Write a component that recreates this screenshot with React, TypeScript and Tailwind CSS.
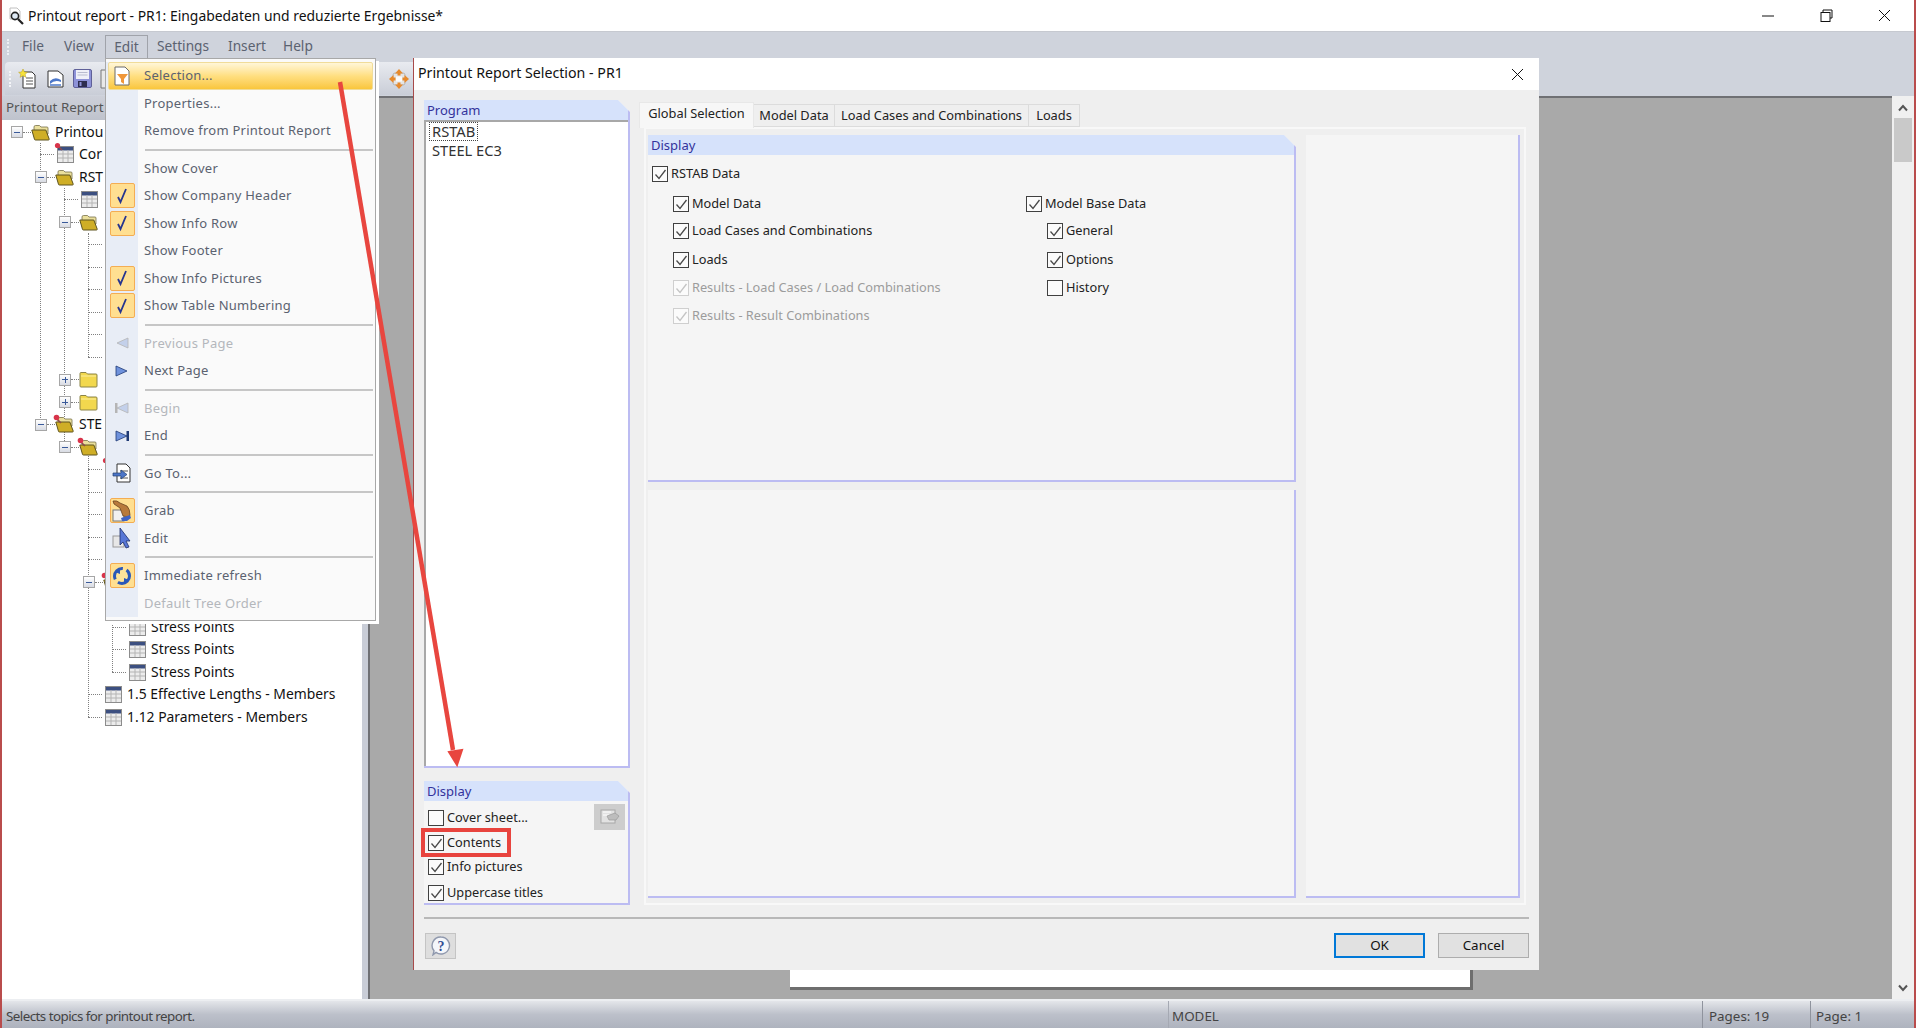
import React from 'react'

// small drawn icons
function Folder({ open = false, pin = false }: { open?: boolean; pin?: boolean }) {
  return (
    <svg width="19" height="17" viewBox="0 0 19 17" className="shrink-0 overflow-visible">
      {open ? (
        <>
          <path d="M3 3 q0 -1.5 1.5 -1.5 h4 l1.5 1.5 h6 q1 0 1 1 v6 h-14 z" fill="#eadf9c" stroke="#77704a" strokeWidth="0.8" />
          <path d="M0.8 6 h14 l3.4 9 q.2 1 -.8 1 h-13 q-.8 0 -1 -1 z" fill="#cfae26" stroke="#5f5520" />
        </>
      ) : (
        <>
          <path d="M1 2.5 q0 -1 1 -1 h5 l1.5 1.5 h8.5 q1 0 1 1 v11 q0 1 -1 1 h-15 q-1 0 -1 -1 z" fill="#f2d84e" stroke="#8b8448" />
          <path d="M2 5 h15" stroke="#fbeea0" />
        </>
      )}
      {pin && (
        <g>
          <path d="M0 1 l6 6" stroke="#8c4a4a" strokeWidth="1.5" />
          <circle cx="1.5" cy="1.5" r="2.8" fill="#d8344a" />
        </g>
      )}
    </svg>
  )
}

function TableIcon({ pin = false }: { pin?: boolean }) {
  return (
    <svg width="17" height="17" viewBox="0 0 17 17" className="shrink-0 overflow-visible">
      <rect x="0.5" y="0.5" width="16" height="16" fill="#ececec" stroke="#8c8c8c" />
      <rect x="1" y="1" width="15" height="3.5" fill="#3c4f80" />
      <path d="M1 8 h15 M1 12 h15 M6 4 v12 M11 4 v12" stroke="#b4b4b4" />
      {pin && (
        <g>
          <path d="M0 -1 l5 5" stroke="#8c4a4a" strokeWidth="1.4" />
          <circle cx="0.5" cy="-0.5" r="2.6" fill="#d8344a" />
        </g>
      )}
    </svg>
  )
}

function Expander({ plus = false }: { plus?: boolean }) {
  return (
    <span className="relative flex h-3 w-3 shrink-0 items-center justify-center border-[1.5px] border-[#a6a6a6] bg-gradient-to-b from-[#ffffff] to-[#d8dbe3]">
      <span className="h-px w-[6px] bg-[#3a5a9a]" />
      {plus && <span className="absolute h-[6px] w-px bg-[#3a5a9a]" />}
    </span>
  )
}

function Dash({ w }: { w: string }) {
  return <span className={`shrink-0 border-t border-dotted border-[#808080] ${w}`} />
}

type Row = { pl: string; box?: 'minus' | 'plus'; icon: 'open' | 'closed' | 'openpin' | 'table' | 'tablepin'; text?: string }

const treeRows: Row[] = [
  { pl: 'pl-[9px]', box: 'minus', icon: 'open', text: 'Printou' },
  { pl: 'pl-[38px]', icon: 'tablepin', text: 'Cor' },
  { pl: 'pl-[33px]', box: 'minus', icon: 'open', text: 'RST' },
  { pl: 'pl-[62px]', icon: 'table' },
  { pl: 'pl-[57px]', box: 'minus', icon: 'open' },
  { pl: 'pl-[86px]', icon: 'table' },
  { pl: 'pl-[86px]', icon: 'table' },
  { pl: 'pl-[86px]', icon: 'table' },
  { pl: 'pl-[86px]', icon: 'table' },
  { pl: 'pl-[86px]', icon: 'table' },
  { pl: 'pl-[86px]', icon: 'table' },
  { pl: 'pl-[57px]', box: 'plus', icon: 'closed' },
  { pl: 'pl-[57px]', box: 'plus', icon: 'closed' },
  { pl: 'pl-[33px]', box: 'minus', icon: 'openpin', text: 'STE' },
  { pl: 'pl-[57px]', box: 'minus', icon: 'openpin' },
  { pl: 'pl-[86px]', icon: 'tablepin' },
  { pl: 'pl-[86px]', icon: 'table' },
  { pl: 'pl-[86px]', icon: 'table' },
  { pl: 'pl-[86px]', icon: 'table' },
  { pl: 'pl-[86px]', icon: 'table' },
  { pl: 'pl-[81px]', box: 'minus', icon: 'openpin' },
  { pl: 'pl-[110px]', icon: 'table' },
  { pl: 'pl-[110px]', icon: 'table', text: 'Stress Points' },
  { pl: 'pl-[110px]', icon: 'table', text: 'Stress Points' },
  { pl: 'pl-[110px]', icon: 'table', text: 'Stress Points' },
  { pl: 'pl-[86px]', icon: 'table', text: '1.5 Effective Lengths - Members' },
  { pl: 'pl-[86px]', icon: 'table', text: '1.12 Parameters - Members' },
]

function TreeView() {
  return (
    <div className="relative flex-1 overflow-hidden bg-white pt-[1px] text-[13.9px] text-[#111]">
      {/* guide lines */}
      <div className="absolute left-[38px] top-[23px] h-[281px] border-l border-dotted border-[#808080]" />
      <div className="absolute left-[62px] top-[68px] h-[259px] border-l border-dotted border-[#808080]" />
      <div className="absolute left-[86px] top-[113px] h-[124px] border-l border-dotted border-[#808080]" />
      <div className="absolute left-[86px] top-[328px] h-[269px] border-l border-dotted border-[#808080]" />
      <div className="absolute left-[110px] top-[473px] h-[79px] border-l border-dotted border-[#808080]" />
      {treeRows.map((r, i) => (
        <div key={i} className={`relative flex h-[22.5px] items-center whitespace-nowrap ${r.pl}`}>
          {r.box ? (
            <>
              <Expander plus={r.box === 'plus'} />
              <Dash w="w-2" />
            </>
          ) : (
            <>
              <Dash w="w-[14px]" />
              <span className="w-[3px]" />
            </>
          )}
          {r.icon === 'open' && <Folder open />}
          {r.icon === 'closed' && <Folder />}
          {r.icon === 'openpin' && <Folder open pin />}
          {r.icon === 'table' && <TableIcon />}
          {r.icon === 'tablepin' && <TableIcon pin />}
          {r.text && <span className="ml-[5px]">{r.text}</span>}
        </div>
      ))}
    </div>
  )
}

function MenuCheck() {
  return (
    <svg width="14" height="18" viewBox="0 0 14 18">
      <path d="M3 10 l2.5 5 L11 2" fill="none" stroke="#27358f" strokeWidth="1.8" />
    </svg>
  )
}

function SelectionIcon() {
  return (
    <svg width="18" height="20" viewBox="0 0 18 20">
      <path d="M2 1 h10 l4 4 v14 h-14 z" fill="#fff" stroke="#6b6b6b" />
      <path d="M4 8 h11 l-4 5 v5 l-3 -2 v-3 z" fill="#f0973a" />
    </svg>
  )
}

function Triangle({ dir, off = false, stop = false }: { dir: 'l' | 'r'; off?: boolean; stop?: boolean }) {
  const fill = off ? '#c3d0ea' : '#6f92dc'
  const line = off ? '#b5b5b5' : '#1f3a75'
  return (
    <svg width="14" height="12" viewBox="0 0 14 12">
      {dir === 'l' ? <path d="M13 1 v10 L2 6 z" fill={fill} stroke={line} strokeWidth="0.8" /> : <path d="M1 1 v10 L12 6 z" fill={fill} stroke={line} strokeWidth="0.8" />}
      {stop && (dir === 'l' ? <rect x="0" y="1" width="2.5" height="10" fill={line} /> : <rect x="11.5" y="1" width="2.5" height="10" fill={line} />)}
    </svg>
  )
}

function GoToIcon() {
  return (
    <svg width="20" height="20" viewBox="0 0 20 20">
      <path d="M5 1 h9 l4 4 v14 h-13 z" fill="#fff" stroke="#333" />
      <path d="M8 8 h8 M8 15 h8" stroke="#555" />
      <path d="M1 10 h8 v-3 l6 4.5 l-6 4.5 v-3 h-8 z" fill="#4c76c8" stroke="#24406f" strokeWidth="0.7" />
    </svg>
  )
}

function GrabIcon() {
  return (
    <svg width="21" height="22" viewBox="0 0 21 22">
      <rect x="1" y="10" width="11" height="11" fill="#f1f1f1" stroke="#777" />
      <path d="M1 1 q4 -1 7 2 l7 3 q3 3 3 9 l-1 2 l-6 -1 l-3 -8 l-6 -4 z" fill="#b87a3c" stroke="#5f3a18" strokeWidth="0.7" />
      <path d="M9 18 l9 -3 l1 3 l-4 3 l-5 0 z" fill="#3f63c4" />
    </svg>
  )
}

function EditIcon() {
  return (
    <svg width="20" height="22" viewBox="0 0 20 22">
      <rect x="1" y="9" width="11" height="11" fill="#e7e7e7" stroke="#9a9a9a" />
      <path d="M8 1 l10 13 l-4 0 l3 6 l-3 1 l-3 -6 l-3 3 z" fill="#5877d6" stroke="#1d2f6b" strokeWidth="0.8" />
    </svg>
  )
}

function RefreshIcon() {
  return (
    <svg width="20" height="20" viewBox="0 0 20 20">
      <circle cx="10" cy="10" r="7.5" fill="#fde39a" stroke="#2b58b8" strokeWidth="3" strokeDasharray="16 4" />
      <path d="M3 6 l5 -3 v5 z M17 14 l-5 3 v-5 z" fill="#2b58b8" />
    </svg>
  )
}

type MenuEntry =
  | { sep: true }
  | { sep?: false; label: string; off?: boolean; checked?: boolean; active?: boolean; icon?: React.ReactNode; lit?: boolean }

const menuEntries: MenuEntry[] = [
  { label: 'Selection...', active: true, icon: <SelectionIcon /> },
  { label: 'Properties...' },
  { label: 'Remove from Printout Report' },
  { sep: true },
  { label: 'Show Cover' },
  { label: 'Show Company Header', checked: true },
  { label: 'Show Info Row', checked: true },
  { label: 'Show Footer' },
  { label: 'Show Info Pictures', checked: true },
  { label: 'Show Table Numbering', checked: true },
  { sep: true },
  { label: 'Previous Page', off: true, icon: <Triangle dir="l" off /> },
  { label: 'Next Page', icon: <Triangle dir="r" /> },
  { sep: true },
  { label: 'Begin', off: true, icon: <Triangle dir="l" off stop /> },
  { label: 'End', icon: <Triangle dir="r" stop /> },
  { sep: true },
  { label: 'Go To...', icon: <GoToIcon /> },
  { sep: true },
  { label: 'Grab', lit: true, icon: <GrabIcon /> },
  { label: 'Edit', icon: <EditIcon /> },
  { sep: true },
  { label: 'Immediate refresh', lit: true, icon: <RefreshIcon /> },
  { label: 'Default Tree Order', off: true },
]

function EditMenu() {
  return (
    <div className="absolute left-[105px] top-[58px] h-[563px] w-[271px] border border-[#a8a8a8] bg-[#fafafa] pt-[3px] shadow-[3px_3px_0_#ffffff]">
      <div className="absolute bottom-[3px] left-0 top-[3px] w-[32px] bg-[#e8edf6]" />
      {menuEntries.map((m, i) =>
        m.sep ? (
          <div key={i} className="relative flex h-[10px] items-center pl-[39px] pr-[2px]">
            <div className="h-[2px] w-full bg-[#c6c6c6]" />
          </div>
        ) : (
          <div key={i} className={`relative flex h-[27.5px] items-center text-[13px] tracking-[0.25px] ${m.off ? 'text-[#b4b7bc]' : 'text-[#5b6270]'}`}>
            {m.active && <div className="absolute inset-x-[2px] inset-y-0 rounded-[2px] border border-[#f0dc9a] bg-gradient-to-b from-[#fff6d8] via-[#ffdf80] to-[#f9c63a]" />}
            <span className="relative flex w-[32px] shrink-0 items-center justify-center">
              {m.checked || m.lit ? (
                <span className="flex h-[25px] w-[25px] items-center justify-center rounded-[2px] border-[1.5px] border-[#f4ad53] bg-[#ffdf91]">
                  {m.checked ? <MenuCheck /> : m.icon}
                </span>
              ) : (
                m.icon
              )}
            </span>
            <span className="relative ml-[6px]">{m.label}</span>
          </div>
        ),
      )}
    </div>
  )
}

function Check({ on = true, off = false }: { on?: boolean; off?: boolean }) {
  return (
    <span className={`flex h-4 w-4 shrink-0 items-center justify-center border-[1.5px] bg-[#fbfbfb] ${off ? 'border-[#cfcfcf]' : 'border-[#404040]'}`}>
      {on && (
        <svg width="13" height="13" viewBox="0 0 13 13">
          <path d="M1.5 6.5 L5 10.5 L11.5 2" fill="none" stroke={off ? '#c4c4c4' : '#4a4a4a'} strokeWidth="1.3" />
        </svg>
      )}
    </span>
  )
}

function Option({ label, on = true, off = false, className = '' }: { label: string; on?: boolean; off?: boolean; className?: string }) {
  return (
    <div className={`flex h-4 items-center gap-[3px] whitespace-nowrap ${off ? 'text-[#9c9c9c]' : 'text-[#222]'} ${className}`}>
      <Check on={on} off={off} />
      <span>{label}</span>
    </div>
  )
}

function Group({ title, className = '', children }: { title?: string; className?: string; children?: React.ReactNode }) {
  return (
    <div className={`flex flex-col border-b-2 border-r-2 border-[#bcbcf2] bg-[#f5f5f5] ${title ? '[clip-path:polygon(0_0,calc(100%-12px)_0,100%_12px,100%_100%,0_100%)]' : ''} ${className}`}>
      {title && <div className="h-[20px] shrink-0 bg-[#d6e2fb] pl-[3px] text-[13px] leading-[20px] text-[#33339c]">{title}</div>}
      {children}
    </div>
  )
}

function HelpIcon() {
  return (
    <svg width="20" height="20" viewBox="0 0 20 20">
      <path d="M10 1 a8.5 8.5 0 1 1 -5 15.4 l-3 2.4 l1 -4 A8.5 8.5 0 0 1 10 1 z" fill="#f4f6fa" stroke="#8f98ad" strokeWidth="1.4" />
      <text x="10" y="15" textAnchor="middle" fontSize="14" fontWeight="700" fill="#2f4c93" fontFamily="Liberation Serif, serif">?</text>
    </svg>
  )
}

function CoverIcon() {
  return (
    <svg width="20" height="16" viewBox="0 0 20 16">
      <rect x="1" y="1" width="14" height="13" fill="#e2e2e2" stroke="#a8a8a8" />
      <path d="M3 3 h8 M3 6 h6" stroke="#ffffff" />
      <path d="M7 7 l8 -3 l4 3 l-3 4 l-7 0 z" fill="#bdbdbd" stroke="#9a9a9a" strokeWidth="0.7" />
    </svg>
  )
}

function SelectionDialog() {
  return (
    <div className="absolute left-[413px] top-[58px] flex h-[912px] w-[1126px] flex-col border-l border-[#a84a4a] bg-[#efefef]">
      <div className="flex h-[32px] shrink-0 items-center justify-between bg-white pb-[2px] pl-[4px] pr-[15px] text-[14.2px] text-[#111]">
        <span>Printout Report Selection - PR1</span>
        <svg width="13" height="13" viewBox="0 0 13 13" className="mt-[2px]">
          <path d="M1 1 L12 12 M12 1 L1 12" stroke="#111" strokeWidth="1" />
        </svg>
      </div>

      <div className="flex h-[815px] shrink-0 pl-[10px] pt-[10px] text-[12.75px]">
        {/* left column */}
        <div className="flex w-[206px] shrink-0 flex-col gap-[13px]">
          <Group title="Program" className="h-[668px]">
            <div className="flex-1 border-l-2 border-t-2 border-[#a8a8a8] bg-white pl-[3px] text-[14.7px] leading-[17px] text-[#333]">
              <div className="w-fit border border-dotted border-[#444] px-[2px]">RSTAB</div>
              <div className="px-[3px] pt-[1px]">STEEL EC3</div>
            </div>
          </Group>
          <Group title="Display" className="relative h-[124px]">
            <div className="flex flex-col pl-[4px]">
              <Option label="Cover sheet..." on={false} className="mt-[9px]" />
              <Option label="Contents" className="mt-[9px]" />
              <Option label="Info pictures" className="mt-[8px]" />
              <Option label="Uppercase titles" className="mt-[10px]" />
            </div>
            <div className="absolute left-[170px] top-[23px] flex h-[26px] w-[31px] items-center justify-center bg-[#cdcdcd]">
              <CoverIcon />
            </div>
          </Group>
        </div>

        {/* right column */}
        <div className="ml-[9px] mt-[2px] flex w-[887px] shrink-0 flex-col">
          <div className="flex h-[25px] items-end text-[12.8px] text-[#222]">
            <div className="relative z-10 -mb-px flex h-[26px] w-[115px] items-center justify-center border border-b-0 border-[#e8e8e8] bg-[#f7f7f7] pb-[3px]">Global Selection</div>
            <div className="flex h-[23px] w-[81px] items-center justify-center border-y border-r border-[#dcdcdc]">Model Data</div>
            <div className="flex h-[23px] w-[194px] items-center justify-center border-y border-r border-[#dcdcdc]">Load Cases and Combinations</div>
            <div className="flex h-[23px] w-[51px] items-center justify-center border-y border-r border-[#dcdcdc]">Loads</div>
          </div>
          <div className="ml-[5px] grid h-[778px] w-[882px] grid-cols-[648px_214px] grid-rows-[347px_408px] gap-x-[10px] gap-y-[8px] border-2 border-[#f8f8f8] pl-[2px] pt-[6px]">
            <Group title="Display">
              <div className="flex pl-[4px] pt-[11px]">
                <div className="flex w-[374px] flex-col">
                  <Option label="RSTAB Data" />
                  <Option label="Model Data" className="ml-[21px] mt-[14px]" />
                  <Option label="Load Cases and Combinations" className="ml-[21px] mt-[11px]" />
                  <Option label="Loads" className="ml-[21px] mt-[13px]" />
                  <Option label="Results - Load Cases / Load Combinations" off className="ml-[21px] mt-[12px]" />
                  <Option label="Results - Result Combinations" off className="ml-[21px] mt-[12px]" />
                </div>
                <div className="flex flex-col pt-[30px]">
                  <Option label="Model Base Data" />
                  <Option label="General" className="ml-[21px] mt-[11px]" />
                  <Option label="Options" className="ml-[21px] mt-[13px]" />
                  <Option label="History" on={false} className="ml-[21px] mt-[12px]" />
                </div>
              </div>
            </Group>
            <div className="row-span-2 border-b-2 border-r-2 border-[#bcbcf2] bg-[#f5f5f5]" />
            <Group />
          </div>
        </div>
      </div>

      <div className="mx-[10px] mt-[12px] h-[2px] bg-[#b8b8b8]" />
      <div className="flex items-start justify-between pl-[11px] pr-[10px] pt-[14px] text-[13.4px] text-[#111]">
        <div className="flex h-[26px] w-[31px] items-center justify-center border border-[#c4c4c4] bg-[#dedede]">
          <HelpIcon />
        </div>
        <div className="flex gap-[13px]">
          <div className="flex h-[25px] w-[91px] items-center justify-center border-2 border-[#0078d7] bg-[#e1e1e1]">OK</div>
          <div className="flex h-[25px] w-[91px] items-center justify-center border border-[#adadad] bg-[#e1e1e1]">Cancel</div>
        </div>
      </div>
    </div>
  )
}

function Annotation() {
  return (
    <>
      <svg width="1916" height="1028" viewBox="0 0 1916 1028" className="pointer-events-none absolute left-0 top-0">
        <path d="M340 82 L453 750" stroke="#e8463f" strokeWidth="4.5" fill="none" />
        <path d="M449 752 L462 750 L457 765 Z" fill="#e8463f" stroke="#e8463f" strokeWidth="2" />
      </svg>
      <div className="absolute left-[421px] top-[828px] h-[29px] w-[90px] border-4 border-[#e8443e]" />
    </>
  )
}

export default function App() {
  return (
    <div className="relative flex h-[1028px] w-[1916px] flex-col overflow-hidden border-x-2 border-x-[#b94c4c] bg-[#cfd3dc] text-[#111] [font-family:'Noto_Sans',sans-serif]">
      {/* title bar */}
      <div className="flex h-[32px] shrink-0 items-center justify-between border-b border-[#c6c9d0] bg-white pl-[6px] text-[13.9px]">
        <div className="flex items-center gap-[3px] pt-[1px]">
          <svg width="17" height="18" viewBox="0 0 17 18">
            <path d="M2 1 h7 l3 3 v8 h-10 z" fill="#fff" stroke="#c0c0c0" />
            <circle cx="7" cy="9" r="3.6" fill="#dfeaf5" stroke="#222" strokeWidth="1.6" />
            <path d="M10 12 l5 5" stroke="#222" strokeWidth="2.2" />
          </svg>
          <span>Printout report - PR1: Eingabedaten und reduzierte Ergebnisse*</span>
        </div>
        <div className="flex items-center gap-[45px] pr-[23px]">
          <svg width="14" height="12" viewBox="0 0 14 12"><path d="M1 6 H13" stroke="#111" strokeWidth="1" /></svg>
          <svg width="13" height="13" viewBox="0 0 13 13" fill="none" stroke="#111"><path d="M3 3 V1 H12 V9 H10" /><rect x="1" y="3.5" width="9" height="9" /></svg>
          <svg width="13" height="13" viewBox="0 0 13 13"><path d="M1 1 L12 12 M12 1 L1 12" stroke="#111" strokeWidth="1" /></svg>
        </div>
      </div>

      {/* menu bar */}
      <div className="flex h-[26px] shrink-0 items-end pl-[5px] text-[13.7px] text-[#5b6270]">
        <div className="mb-[3px] mr-[12px] h-[16px] w-[3px] border-l-2 border-dotted border-[#eef0f4]" />
        <span className="mb-[1px] w-[42px]">File</span>
        <span className="mb-[1px] w-[41px]">View</span>
        <span className="flex h-[23px] w-[43px] items-center justify-center border border-b-0 border-[#a0a3aa] pt-[1px]">Edit</span>
        <span className="mb-[1px] ml-[9px] w-[71px]">Settings</span>
        <span className="mb-[1px] w-[55px]">Insert</span>
        <span className="mb-[1px]">Help</span>
      </div>

      {/* tool bar */}
      <div className="h-[38px] shrink-0 pl-[3px] pt-[4px]">
        <div className="flex h-[33px] w-[412px] items-center rounded-tl-[4px] bg-gradient-to-b from-[#e9ebf0] to-[#c9cdd7] pl-[4px]">
          <div className="h-[16px] w-[3px] border-l-2 border-dotted border-[#f4f5f8]" />
          <svg width="20" height="20" viewBox="0 0 20 20" className="ml-[6px]">
            <path d="M5 3 h9 l3 3 v13 h-12 z" fill="#fff" stroke="#333" />
            <path d="M8 9 h7 M8 12 h7 M8 15 h7" stroke="#555" />
            <path d="M5 0 l1.4 3 l3 .3 l-2.3 2 l.8 3 l-2.9 -1.6 l-2.9 1.6 l.8 -3 l-2.3 -2 l3 -.3 z" fill="#f6e23c" stroke="#b59a1e" strokeWidth="0.5" />
          </svg>
          <svg width="17" height="18" viewBox="0 0 17 18" className="ml-[9px]">
            <path d="M1 1 h10 l5 4 v12 h-15 z" fill="#fff" stroke="#333" />
            <path d="M3 11 q5 -5 11 -1 v2 q-6 -3 -11 2 z" fill="#4d78c9" />
            <path d="M3 15 h11" stroke="#4d78c9" strokeWidth="1.5" />
          </svg>
          <svg width="19" height="19" viewBox="0 0 19 19" className="ml-[9px]">
            <rect x="0.5" y="0.5" width="18" height="18" rx="1.5" fill="#8d92d8" stroke="#5f6098" />
            <rect x="3" y="1" width="13" height="9" fill="#eef0f8" />
            <path d="M4.5 3.5 h10 M4.5 6 h10" stroke="#b8bcd0" />
            <rect x="5" y="12" width="9" height="6" fill="#2d2d4f" />
            <rect x="6.5" y="13" width="2" height="4" fill="#8d92d8" />
          </svg>
          <svg width="18" height="20" viewBox="0 0 18 20" className="ml-[8px]">
            <path d="M1 1 h12 l4 4 v14 h-16 z" fill="#e8e8e8" stroke="#777" />
          </svg>
          <svg width="20" height="20" viewBox="0 0 20 20" className="ml-[271px]">
            <rect x="4" y="4" width="12" height="12" rx="2" fill="#e4e4e4" stroke="#b5b5b5" />
            <path d="M10 0 l4 4.5 h-2.5 v2 h-3 v-2 h-2.5 z M10 20 l4 -4.5 h-2.5 v-2 h-3 v2 h-2.5 z M0 10 l4.5 -4 v2.5 h2 v3 h-2 v2.5 z M20 10 l-4.5 -4 v2.5 h-2 v3 h2 v2.5 z" fill="#e78a2c" />
            <rect x="7" y="7.5" width="6" height="5" fill="#fbfbfb" />
          </svg>
        </div>
      </div>

      {/* work area */}
      <div className="flex min-h-0 flex-1">
        <div className="flex w-[360px] shrink-0 flex-col">
          <div className="h-[24px] shrink-0 bg-gradient-to-b from-[#cdd0d9] to-[#bfc3cd] pl-[4px] text-[13.4px] leading-[22px] text-[#555]">Printout Report</div>
          <TreeView />
        </div>
        <div className="w-[8px] shrink-0 border-r-2 border-[#6f7074] bg-[#c9cdd7]" />
        <div className="relative flex-1 border-t-2 border-[#6f7074] bg-[#a9a9a9]">
          <div className="absolute bottom-[9px] left-[420px] h-[22px] w-[683px] border-b-[3px] border-r-[3px] border-[#6e6e6e] bg-white" />
        </div>
        <div className="flex w-[22px] shrink-0 flex-col items-center bg-[#f0f0f0] pt-[8px]">
          <svg width="10" height="8" viewBox="0 0 10 8"><path d="M1 6.5 L5 2 L9 6.5" fill="none" stroke="#555" strokeWidth="2" /></svg>
          <div className="mt-[6px] h-[44px] w-[18px] bg-[#c9c9c9]" />
          <svg width="10" height="8" viewBox="0 0 10 8" className="mb-[7px] mt-auto"><path d="M1 1.5 L5 6 L9 1.5" fill="none" stroke="#555" strokeWidth="2" /></svg>
        </div>
      </div>

      {/* status bar */}
      <div className="flex h-[29px] shrink-0 items-center border-t-2 border-[#eceef1] bg-gradient-to-b from-[#e4e6ea] via-[#bcc0ca] to-[#aeb3be] text-[13.4px] text-[#444]">
        <span className="w-[1166px] shrink-0 pl-[4px] pt-[3px] tracking-[-0.55px]">Selects topics for printout report.</span>
        <span className="flex h-full w-[534px] shrink-0 items-center border-l border-[#a5a9b3] pl-[3px] pt-[3px]">MODEL</span>
        <span className="flex h-full w-[108px] shrink-0 items-center border-l border-[#8f939d] pl-[6px] pt-[3px]">Pages: 19</span>
        <span className="flex h-full items-center border-l border-[#8f939d] pl-[5px] pt-[3px]">Page: 1</span>
      </div>

      <div className="absolute -left-[2px] top-0 h-full w-[1916px]">
        <EditMenu />
        <SelectionDialog />
        <Annotation />
      </div>
    </div>
  )
}
